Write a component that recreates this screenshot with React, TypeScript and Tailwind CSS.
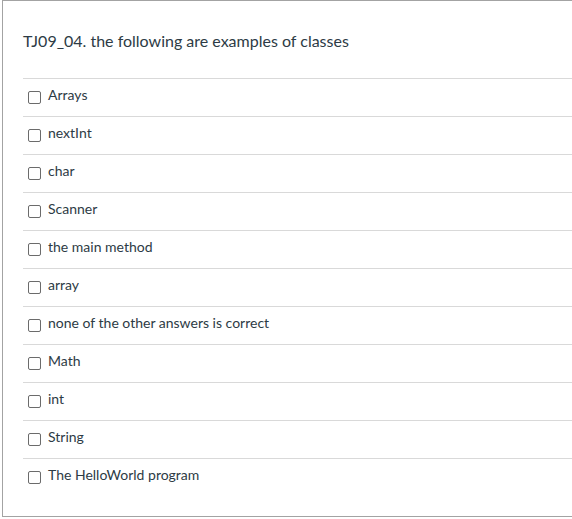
import React from "react";

const options = [
  "Arrays",
  "nextInt",
  "char",
  "Scanner",
  "the main method",
  "array",
  "none of the other answers is correct",
  "Math",
  "int",
  "String",
  "The HelloWorld program",
];

export default function App() {
  return (
    <div className="w-[572px] h-[519px] bg-white overflow-hidden" style={{ fontFamily: "Lato, 'Noto Sans', sans-serif" }}>
      <div className="ml-[2px] w-[600px] h-[517px] border-l border-t border-b border-[#a3a3a3] pl-[20px] text-[#2d3b45]">
        <div className="pt-[28px] h-[77px] text-[16px] leading-[24px]">TJ09_04. the following are examples of classes</div>
        <div className="flex flex-col">
          {options.map((o) => (
            <div key={o} className="h-[38px] border-t border-[#d9d9d9] flex items-center pl-[5px]">
              <span className="w-[13px] h-[13px] border border-[#6b6b6b] rounded-[2px] bg-white mr-[7px] shrink-0" />
              <span className="text-[14px] leading-[20px] pb-[5px]">{o}</span>
            </div>
          ))}
        </div>
      </div>
    </div>
  );
}
